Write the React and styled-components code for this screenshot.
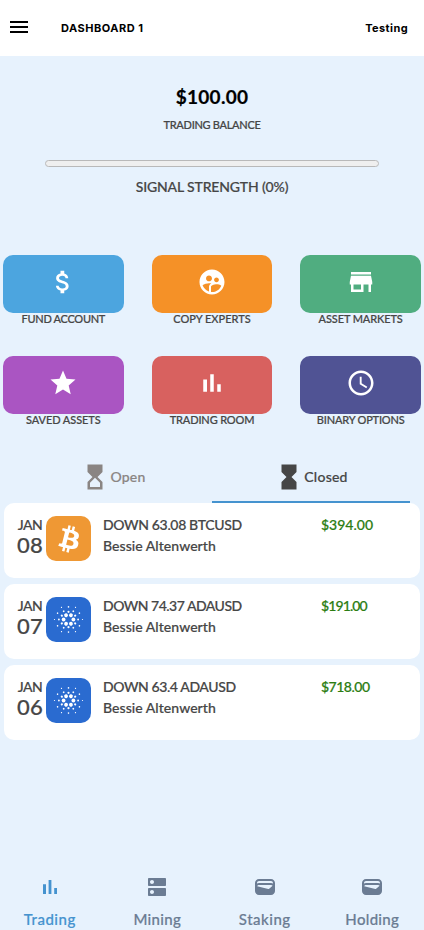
import React, { useState } from "react";
import styled, { createGlobalStyle } from "styled-components";
import {
    MdMenu,
    MdAttachMoney,
    MdSupervisedUserCircle,
    MdStore,
    MdStar,
    MdAccessTime,
    MdHourglassTop,
    MdHourglassFull,
    MdDns,
    MdWallet
} from "react-icons/md";


const GlobalStyle = createGlobalStyle`
    * {
        box-sizing: border-box;
    }

    body {
        margin: 0;
        background: #e7f2fd;
        color: #464646;
        font-family: Lato, "Liberation Sans", sans-serif;
        font-weight: 500;
        -webkit-text-stroke: 0.2px currentColor;
        overflow: hidden;
    }
`

const Page = styled.div`
    display: flex;
    flex-direction: column;
    height: 930px;
    overflow: hidden;
`

const TopBar = styled.header`
    display: flex;
    align-items: center;
    height: 56px;
    padding: 0 16px 0 7px;
    background: #fff;
    color: #000;
    font: 700 11px/16px Inter, sans-serif;
    -webkit-text-stroke: 0;

    svg {
        margin: -2px 30px 0 0;
    }
`

const PageTitle = styled.span`
    flex: 1;
    letter-spacing: 0.5px;
`

const UserName = styled.span`
    letter-spacing: 0.4px;
`

const Balance = styled.section`
    display: flex;
    flex-direction: column;
    align-items: center;
    height: 199px;
    padding-top: 28px;
`

const Amount = styled.div`
    color: #000;
    font-size: 19px;
    font-weight: 700;
    line-height: 26px;
    letter-spacing: 0.3px;
`

const BalanceLabel = styled.div`
    margin-top: 7px;
    font-size: 11px;
    line-height: 16px;
    letter-spacing: -0.3px;
`

const SignalTrack = styled.div`
    width: 334px;
    height: 7px;
    margin-top: 27px;
    border: 1px solid #b9b9b9;
    border-radius: 4px;
    background: #efefef;
`

const SignalFill = styled.div`
    height: 100%;
    border-radius: 4px;
    background: #4593cf;
`

const SignalLabel = styled.div`
    margin-top: 10px;
    font-size: 14px;
    line-height: 20px;
    letter-spacing: -0.15px;
`

const Actions = styled.section`
    display: grid;
    grid-template-columns: repeat(3, 1fr);
    column-gap: 28px;
    grid-auto-rows: 101px;
    padding: 0 3px;
`

const Action = styled.div`
    text-align: center;
    font-size: 11px;
    line-height: 11px;
    letter-spacing: ${props => props.$spacing || 0}px;
    white-space: nowrap;
`

const Tile = styled.div`
    display: flex;
    justify-content: center;
    height: 58px;
    padding-top: 12px;
    border-radius: 10px;
    background: ${props => props.$color};
    color: #fff;
`

const Tabs = styled.div`
    display: flex;
    height: 46px;
    padding: 0 14px;
    flex-shrink: 0;
`

const Tab = styled.div`
    display: flex;
    flex: 1;
    align-items: center;
    justify-content: center;
    border-bottom: 2px solid ${props => props.$active ? '#4593cf' : 'transparent'};
    padding-top: 2px;
    padding-bottom: 7px;
    color: ${props => props.$active ? '#464646' : '#8a8583'};
    font-size: 14px;
    letter-spacing: 0.25px;
    cursor: pointer;
`

const Trades = styled.section`
    display: flex;
    flex: 1;
    flex-direction: column;
    gap: 6px;
    padding: 0 4px;
`

const TradeCard = styled.article`
    display: flex;
    height: 75px;
    padding: 13px 12px;
    border-radius: 10px;
    background: #fff;
    font-size: 14px;
    line-height: 21px;
`

const TradeDate = styled.div`
    width: 28px;
    margin: -1px 2px 0 0;
    line-height: 19px;
    letter-spacing: -0.6px;
    text-align: center;
    white-space: nowrap;

    strong {
        display: block;
        font-size: 22px;
        font-weight: 500;
        line-height: 22px;
        letter-spacing: 0.2px;
    }
`

const Coin = styled.div`
    display: flex;
    align-items: center;
    justify-content: center;
    width: 45px;
    height: 45px;
    margin-right: 12px;
    border-radius: 10px;
    background: ${props => props.$color};
    color: #fff;
`

const TradeInfo = styled.div`
    width: 218px;
    margin-top: -2px;
`

const TradeName = styled.div`
    letter-spacing: ${props => props.$spacing || 0}px;
`

const Profit = styled.div`
    margin-top: -2px;
    color: #2c7d12;
    letter-spacing: ${props => props.$spacing || 0}px;
`

const BottomNav = styled.nav`
    display: grid;
    grid-template-columns: repeat(4, 107.5px);
    height: 58px;
    margin: 0 -4px;
    flex-shrink: 0;
`

const NavItem = styled.div`
    display: flex;
    flex-direction: column;
    align-items: center;
    padding-top: 3px;
    color: ${props => props.$active ? '#4593cf' : '#6b7c93'};
    font-size: 15px;
    line-height: 20px;
    letter-spacing: ${props => props.$spacing || 0.3}px;

    svg {
        margin-bottom: 10px;
    }
`

const BarsIcon = ({ size }) => (
    <svg width={size} height={size} viewBox="0 0 24 24" fill="currentColor">
        <path d="M5 9.2h3V19H5zM10.6 5h2.8v14h-2.8zm5.6 8H19v6h-2.8z" />
    </svg>
)

const BitcoinIcon = () => (
    <svg width="44" height="44" viewBox="0 0 32 32" fill="currentColor">
        <path d="M23.189 14.02c.314-2.096-1.283-3.223-3.465-3.975l.708-2.84-1.728-.43-.69 2.765c-.454-.114-.92-.22-1.385-.326l.695-2.783L15.596 6l-.708 2.839c-.376-.086-.746-.17-1.104-.26l.002-.009-2.384-.595-.46 1.846s1.283.294 1.256.312c.7.175.826.638.805 1.006l-.806 3.235c.048.012.11.03.18.057l-.183-.045-1.13 4.532c-.086.212-.303.531-.793.41.018.025-1.256-.313-1.256-.313l-.858 1.978 2.25.561c.418.105.828.215 1.231.318l-.715 2.872 1.727.43.708-2.84c.472.127.93.245 1.378.357l-.706 2.828 1.728.43.715-2.866c2.948.558 5.164.333 6.097-2.333.752-2.146-.037-3.385-1.588-4.192 1.13-.26 1.98-1.003 2.207-2.538zm-3.95 5.538c-.533 2.147-4.148.986-5.32.695l.95-3.805c1.172.293 4.929.872 4.37 3.11zm.535-5.569c-.487 1.953-3.495.96-4.47.717l.86-3.45c.975.243 4.118.696 3.61 2.733z" />
    </svg>
)

// rings of six dots, from the middle outwards
const rings = [
    { distance: 4.9, r: 1.9, turn: 0 },
    { distance: 7.7, r: 1.1, turn: 30 },
    { distance: 9.6, r: 0.9, turn: 0 },
    { distance: 12.6, r: 0.8, turn: 30 },
    { distance: 14, r: 0.6, turn: 0 },
]

const CardanoIcon = () => (
    <svg width="45" height="45" viewBox="-22.5 -22.5 45 45" fill="currentColor">
        {rings.map(ring => [0, 60, 120, 180, 240, 300].map(a => (
            <circle
                key={`${ring.distance}-${a}`}
                cx={ring.distance}
                r={ring.r}
                transform={`rotate(${a + ring.turn})`}
            />
        )))}
    </svg>
)

const actions = [
    { label: 'FUND ACCOUNT', color: '#4ca5df', Icon: MdAttachMoney, spacing: -0.3 },
    { label: 'COPY EXPERTS', color: '#f59127', Icon: MdSupervisedUserCircle },
    { label: 'ASSET MARKETS', color: '#50ad80', Icon: MdStore, spacing: -0.12 },
    { label: 'SAVED ASSETS', color: '#aa55c2', Icon: MdStar, spacing: -0.08 },
    { label: 'TRADING ROOM', color: '#d8615f', Icon: BarsIcon, spacing: -0.15 },
    { label: 'BINARY OPTIONS', color: '#505394', Icon: MdAccessTime, spacing: -0.2 },
]

const trades = [
    { day: '08', name: 'DOWN 63.08 BTCUSD', profit: '$394.00', coin: 'BTC', spacing: -0.34 },
    { day: '07', name: 'DOWN 74.37 ADAUSD', profit: '$191.00', coin: 'ADA', spacing: -0.5, profitSpacing: -0.9 },
    { day: '06', name: 'DOWN 63.4 ADAUSD', profit: '$718.00', coin: 'ADA', spacing: -0.4, profitSpacing: -0.5 },
]

const navItems = [
    { label: 'Trading', Icon: BarsIcon, spacing: 0.5 },
    { label: 'Mining', Icon: MdDns, spacing: 0.3 },
    { label: 'Staking', Icon: MdWallet, spacing: 0.5 },
    { label: 'Holding', Icon: MdWallet, spacing: 0.3 },
]

const Trade = ({ data }) => (
    <TradeCard>
        <TradeDate>JAN<strong>{data.day}</strong></TradeDate>
        <Coin $color={data.coin === 'BTC' ? '#ef9834' : '#2a6bd0'}>
            {data.coin === 'BTC' ? <BitcoinIcon /> : <CardanoIcon />}
        </Coin>
        <TradeInfo>
            <TradeName $spacing={data.spacing}>{data.name}</TradeName>
            <TradeName $spacing={0.05}>Bessie Altenwerth</TradeName>
        </TradeInfo>
        <Profit $spacing={data.profitSpacing}>{data.profit}</Profit>
    </TradeCard>
)

const App = () => {
    const [tab, setTab] = useState('closed')
    const signal = 0

    return (
        <Page>
            <GlobalStyle />
            <TopBar>
                <MdMenu size={24} />
                <PageTitle>DASHBOARD 1</PageTitle>
                <UserName>Testing</UserName>
            </TopBar>
            <Balance>
                <Amount>$100.00</Amount>
                <BalanceLabel>TRADING BALANCE</BalanceLabel>
                <SignalTrack>
                    <SignalFill style={{ width: `${signal}%` }} />
                </SignalTrack>
                <SignalLabel>SIGNAL STRENGTH ({signal}%)</SignalLabel>
            </Balance>
            <Actions>
                {actions.map(({ label, color, Icon, spacing }) => (
                    <Action key={label} $spacing={spacing}>
                        <Tile $color={color}><Icon size={30} /></Tile>
                        {label}
                    </Action>
                ))}
            </Actions>
            <Tabs>
                <Tab $active={tab === 'open'} onClick={() => setTab('open')}>
                    <MdHourglassTop size={30} />Open
                </Tab>
                <Tab $active={tab === 'closed'} onClick={() => setTab('closed')}>
                    <MdHourglassFull size={30} />Closed
                </Tab>
            </Tabs>
            <Trades>
                {trades.map(x => <Trade key={x.day} data={x} />)}
            </Trades>
            <BottomNav>
                {navItems.map(({ label, Icon, spacing }, i) => (
                    <NavItem key={label} $active={i === 0} $spacing={spacing}><Icon size={24} />{label}</NavItem>
                ))}
            </BottomNav>
        </Page>
    )
}

export default App;
